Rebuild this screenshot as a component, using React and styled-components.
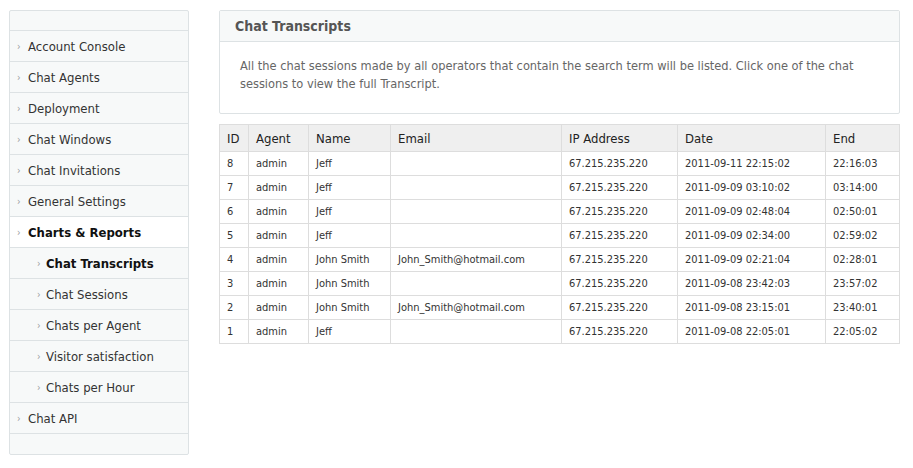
import React from 'react'
import styled, { createGlobalStyle } from 'styled-components'

const GlobalStyle = createGlobalStyle`
    html, body {
        margin: 0;
        padding: 0;
        background: #ffffff;
    }
    body {
        font-family: "DejaVu Sans Condensed", "DejaVu Sans", sans-serif;
        color: #333;
    }
`

const Page = styled.div`
    display: flex;
    align-items: flex-start;
    gap: 30px;
    padding: 10px 14px 0 9px;
`

const Sidebar = styled.nav`
    width: 178px;
    flex: none;
    border: 1px solid #dde2e4;
    border-radius: 2px;
    background: #f7f9f9;
    padding-top: 19px;
    padding-bottom: 20px;
`

const MenuList = styled.ul`
    list-style: none;
    margin: 0;
    padding: 0;
`

const MenuItem = styled.li`
    display: flex;
    align-items: center;
    height: 30px;
    border-bottom: 1px solid #dde2e4;
    padding-left: ${p => (p.$sub ? 27 : 7)}px;
    background: ${p => (p.$open ? '#ffffff' : 'transparent')};
    font-size: 13px;
    font-weight: ${p => (p.$bold ? 'bold' : 'normal')};
    color: ${p => (p.$bold ? '#111' : '#333')};
    &:first-child {
        border-top: 1px solid #dde2e4;
    }
`

const Chevron = styled.span`
    width: ${p => (p.$sub ? 9 : 11)}px;
    color: #999;
    font-size: 10px;
    font-weight: normal;
`

const Main = styled.div`
    flex: 1;
    display: flex;
    flex-direction: column;
    gap: 10px;
`

const Panel = styled.section`
    border: 1px solid #dde2e4;
    border-radius: 2px;
    background: #fff;
`

const PanelHeader = styled.h2`
    margin: 0;
    height: 30px;
    display: flex;
    align-items: center;
    padding-left: 15px;
    background: #f7f9f9;
    border-bottom: 1px solid #dde2e4;
    font-size: 14px;
    font-weight: bold;
    color: #555;
`

const PanelBody = styled.p`
    margin: 0;
    padding: 15px 20px 20px 20px;
    font-size: 12.7px;
    line-height: 18px;
    color: #666;
`

const Table = styled.table`
    width: 680px;
    border-collapse: collapse;
    table-layout: fixed;
`

const HeadCell = styled.th`
    height: 26px;
    padding: 0 0 0 7px;
    text-align: left;
    font-weight: normal;
    font-size: 13px;
    color: #222;
    background: #efefef;
    border: 1px solid #dddddd;
`

const Cell = styled.td`
    height: 23px;
    padding: 0 0 0 7px;
    font-size: 11px;
    color: #333;
    border: 1px solid #dddddd;
    white-space: nowrap;
    overflow: hidden;
`

const menu = [
    { label: 'Account Console' },
    { label: 'Chat Agents' },
    { label: 'Deployment' },
    { label: 'Chat Windows' },
    { label: 'Chat Invitations' },
    { label: 'General Settings' },
    { label: 'Charts & Reports', bold: true, open: true },
    { label: 'Chat Transcripts', sub: true, bold: true },
    { label: 'Chat Sessions', sub: true },
    { label: 'Chats per Agent', sub: true },
    { label: 'Visitor satisfaction', sub: true },
    { label: 'Chats per Hour', sub: true },
    { label: 'Chat API' },
]

const columns = [
    { title: 'ID', width: 29 },
    { title: 'Agent', width: 60 },
    { title: 'Name', width: 82 },
    { title: 'Email', width: 171 },
    { title: 'IP Address', width: 116 },
    { title: 'Date', width: 148 },
    { title: 'End', width: 74 },
]

const rows = [
    ['8', 'admin', 'Jeff', '', '67.215.235.220', '2011-09-11 22:15:02', '22:16:03'],
    ['7', 'admin', 'Jeff', '', '67.215.235.220', '2011-09-09 03:10:02', '03:14:00'],
    ['6', 'admin', 'Jeff', '', '67.215.235.220', '2011-09-09 02:48:04', '02:50:01'],
    ['5', 'admin', 'Jeff', '', '67.215.235.220', '2011-09-09 02:34:00', '02:59:02'],
    ['4', 'admin', 'John Smith', 'John_Smith@hotmail.com', '67.215.235.220', '2011-09-09 02:21:04', '02:28:01'],
    ['3', 'admin', 'John Smith', '', '67.215.235.220', '2011-09-08 23:42:03', '23:57:02'],
    ['2', 'admin', 'John Smith', 'John_Smith@hotmail.com', '67.215.235.220', '2011-09-08 23:15:01', '23:40:01'],
    ['1', 'admin', 'Jeff', '', '67.215.235.220', '2011-09-08 22:05:01', '22:05:02'],
]

const App = () => {
    return (
        <Page>
            <GlobalStyle />
            <Sidebar>
                <MenuList>
                    {menu.map(item => (
                        <MenuItem key={item.label} $sub={item.sub} $bold={item.bold} $open={item.open}>
                            <Chevron $sub={item.sub}>›</Chevron>
                            {item.label}
                        </MenuItem>
                    ))}
                </MenuList>
            </Sidebar>
            <Main>
                <Panel>
                    <PanelHeader>Chat Transcripts</PanelHeader>
                    <PanelBody>
                        All the chat sessions made by all operators that contain the search term will be listed. Click one of the chat sessions to view the full Transcript.
                    </PanelBody>
                </Panel>
                <Table>
                    <colgroup>
                        {columns.map(c => <col key={c.title} style={{ width: c.width }} />)}
                    </colgroup>
                    <thead>
                        <tr>
                            {columns.map(c => <HeadCell key={c.title}>{c.title}</HeadCell>)}
                        </tr>
                    </thead>
                    <tbody>
                        {rows.map(r => (
                            <tr key={r[0]}>
                                {r.map((v, i) => <Cell key={i}>{v}</Cell>)}
                            </tr>
                        ))}
                    </tbody>
                </Table>
            </Main>
        </Page>
    )
}

export default App
